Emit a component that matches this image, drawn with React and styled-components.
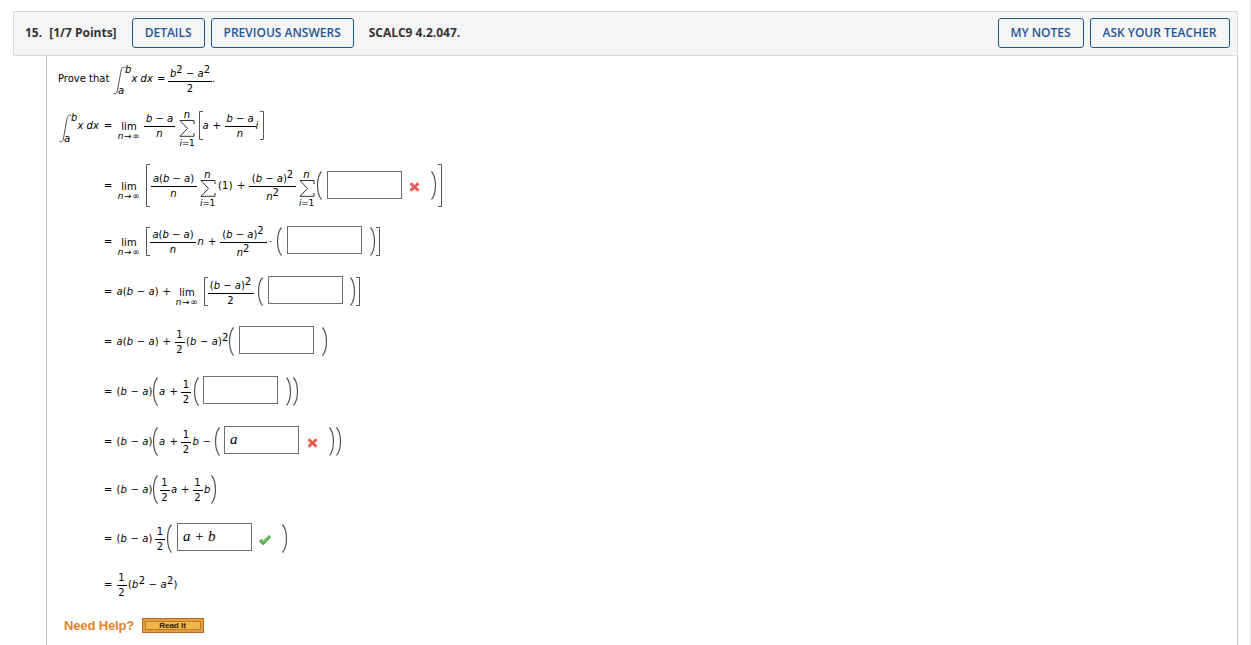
import React from "react";
import styled, { createGlobalStyle } from "styled-components";

const GlobalStyle = createGlobalStyle`
  * {
    box-sizing: border-box;
  }
  body {
    margin: 0;
    background: #fff;
    overflow: hidden;
  }
`;

const Page = styled.div`
  width: 1251px;
  height: 645px;
  padding: 11px 13px 0;
  border-right: 1px solid #e4e4e4;
  overflow: hidden;
`;

const Header = styled.header`
  display: flex;
  align-items: center;
  width: 1225px;
  height: 45px;
  padding: 0 7px 2px 11px;
  background: #f5f5f5;
  border: 1px solid #d8d8d8;
  border-radius: 1px;
  font: 700 12px "Open Sans", sans-serif;
  color: #333;
  white-space: nowrap;
`;

const Points = styled.span`
  margin-left: 7px;
  width: 83px;
`;

const HeaderButton = styled.button`
  width: ${(props) => props.$w}px;
  height: 30px;
  margin: 0 6px 0 0;
  padding: 0 1px 0 0;
  border: 1px solid #1f5592;
  border-radius: 3px;
  background: transparent;
  color: #1f5592;
  font: 600 12px "Open Sans", sans-serif;
  white-space: nowrap;

  &:last-child {
    margin-right: 0;
  }
`;

const Code = styled.span`
  margin-left: 8.5px;
  flex: 1;
`;

const Content = styled.main`
  width: 1192px;
  height: 589px;
  margin-left: 33px;
  padding: 2px 0 0 11px;
  border: solid #c4c4c4;
  border-width: 0 1px;
  font: 10px/12px "DejaVu Sans", sans-serif;
  color: #000;
`;

const Row = styled.div`
  display: flex;
  align-items: center;
  height: 41px;
  margin-bottom: ${(props) => props.$gap || 9}px;
  padding-left: ${(props) => props.$indent || 0}px;
  white-space: nowrap;
`;

const Part = styled.span`
  flex: none;
  width: ${(props) => props.$w}px;
  margin-left: ${(props) => props.$ml || 0}px;
  margin-top: ${(props) => props.$mt || 0}px;
`;

const Text = styled(Part)`
  margin-top: ${(props) => props.$mt ?? -2}px;
  letter-spacing: ${(props) => props.$ls || 0}px;
`;

const FractionBox = styled(Part)`
  display: grid;
  grid-template-rows: 13px 1px 13px;
  justify-items: center;
`;

const Bar = styled.span`
  width: 100%;
  background: #000;
`;

const Denominator = styled.span`
  padding-top: ${(props) => (props.$raised ? 4 : 1)}px;
`;

const Sup = styled.span`
  position: relative;
  top: -4px;
`;

const Limits = styled(Part)`
  display: grid;
  justify-items: center;
  grid-template-rows: ${(props) => props.$rows};
`;

const Index = styled.span`
  font-size: 9px;
  letter-spacing: -0.2px;
`;

const Approach = styled.span`
  font-size: 9px;
  letter-spacing: 0.6px;
`;

const IntegralBox = styled(Part)`
  display: flex;
  height: 29px;
`;

const Bounds = styled.span`
  display: flex;
  flex-direction: column;
  justify-content: space-between;
  margin: 0 0 -2px -8px;
`;

const Upper = styled.i`
  margin: -2px 0 0 7px;
`;

const Glyph = styled.svg`
  display: block;
  flex: none;
  overflow: visible;
  fill: none;
  stroke: ${(props) => props.$color || "#555"};
`;

const Blank = styled(Part).attrs({ as: "input", type: "text" })`
  width: 75px;
  height: 28px;
  padding: 0 5px 1px;
  border: 1px solid #6e6e6e;
  border-radius: 0;
  background: #fff;
  color: #000;
  font: italic 15px "Liberation Serif", serif;
`;

const HelpRow = styled.div`
  display: flex;
  align-items: center;
  height: 17px;
  padding-left: 6px;
`;

const HelpLabel = styled.span`
  width: 78px;
  color: #e08227;
  font: 700 13px "Liberation Sans", sans-serif;
  letter-spacing: -0.15px;
`;

const ReadButton = styled.button`
  width: 62px;
  height: 15px;
  padding: 0 1px 0 0;
  border: 1px solid #b8672a;
  background: #f2b549;
  box-shadow: inset 0 0 0 2px #ee9c37, inset 0 0 0 3px #b08038;
  color: #301c04;
  font: 700 8px/12px "Liberation Sans", sans-serif;
`;

const Fraction = ({ w, ml, mt, top, bottom, raised }) => (
  <FractionBox $w={w} $ml={ml} $mt={mt}>
    <span>{top}</span>
    <Bar />
    <Denominator $raised={raised}>{bottom}</Denominator>
  </FractionBox>
);

const Half = ({ ml }) => <Fraction w={10} ml={ml} top="1" bottom="2" />;

const Integral = () => (
  <IntegralBox $w={18.5} $mt={3}>
    <Glyph width="13" height="29" viewBox="0 0 13 29">
      <path d="M.5 27.500C3 28.500 4 27 4.500 24L8 5C8.500 2 9.500 .5 12.500 1.500" />
    </Glyph>
    <Bounds>
      <Upper>b</Upper>
      <i>a</i>
    </Bounds>
  </IntegralBox>
);

const Lim = ({ ml }) => (
  <Limits $w={25} $ml={ml} $mt={6} $rows="9px 9px">
    <span>lim</span>
    <Approach>
      <i>n</i>→∞
    </Approach>
  </Limits>
);

const Sum = ({ ml }) => (
  <Limits $w={16} $ml={ml} $mt={5} $rows="11px 17px 13px">
    <i>n</i>
    <Glyph width="16" height="17" viewBox="0 0 16 17" $color="#333">
      <path d="M15 4V.5H1L8.500 8.500L1 16.300H15V13" />
    </Glyph>
    <Index>
      <i>i</i>=1
    </Index>
  </Limits>
);

const Paren = ({ ml, right }) => (
  <Part $w={6} $ml={ml} $mt={-2}>
    <Glyph width="6" height="29" viewBox="0 0 6 29">
      <path
        d={right ? "M.5 .5C5.800 7 5.800 22 .5 28.500" : "M5.500 .5C.2 7 .2 22 5.500 28.500"}
        strokeWidth="1.200"
      />
    </Glyph>
  </Part>
);

const Bracket = ({ ml, right, h = 29 }) => (
  <Part $w={4} $ml={ml} $mt={-2}>
    <Glyph width="4" height={h} viewBox={`0 0 4 ${h}`}>
      <path d={right ? `M0 .5H3.500V${h - 0.5}H0` : `M4 .5H.5V${h - 0.5}H4`} />
    </Glyph>
  </Part>
);

const Wrong = () => (
  <Part $w={11} $ml={7.5}>
    <Glyph width="11" height="10" viewBox="0 0 11 10" $color="#ea5a52">
      <path d="M1.500 1.200L9.500 8.800M9.500 1.200L1.500 8.800" strokeWidth="2.800" />
    </Glyph>
  </Part>
);

const Right = () => (
  <Part $w={12} $ml={7}>
    <Glyph width="12" height="11" viewBox="0 0 12 11">
      <path d="M1.200 6L4.200 9L11 2" stroke="#4b9a47" strokeWidth="3.200" />
      <path d="M1.600 5.800L4.200 8.300L10.500 2" stroke="#74c56a" strokeWidth="1.600" />
    </Glyph>
  </Part>
);

const Equals = () => <Text $w={12.5}>=</Text>;

const Minus = () => (
  <Text $w={36} $ls={0.15}>
    (<i>b</i> − <i>a</i>)
  </Text>
);

const aTimes = (
  <>
    <i>a</i>(<i>b</i> − <i>a</i>)
  </>
);

const squared = (
  <>
    (<i>b</i> − <i>a</i>)<Sup>2</Sup>
  </>
);

const nSquared = (
  <>
    <i>n</i>
    <Sup>2</Sup>
  </>
);

const difference = (
  <>
    <i>b</i>
    <Sup>2</Sup> − <i>a</i>
    <Sup>2</Sup>
  </>
);

const bMinusA = <i>b − a</i>;

const App = () => (
  <>
    <GlobalStyle />
    <Page>
      <Header>
        <span>15.</span>
        <Points>[1/7 Points]</Points>
        <HeaderButton $w={73}>DETAILS</HeaderButton>
        <HeaderButton $w={143}>PREVIOUS ANSWERS</HeaderButton>
        <Code>SCALC9 4.2.047.</Code>
        <HeaderButton $w={86}>MY NOTES</HeaderButton>
        <HeaderButton $w={140}>ASK YOUR TEACHER</HeaderButton>
      </Header>
      <Content>
        <Row $gap={7}>
          <Text $w={55} $mt={0}>
            Prove that
          </Text>
          <Integral />
          <Text $w={25.5} $mt={0}>
            <i>x dx</i>
          </Text>
          <Text $w={11} $mt={0}>
            =
          </Text>
          <Fraction w={44} mt={6} top={difference} bottom="2" />
          <Text $w={4} $mt={0}>
            .
          </Text>
        </Row>
        <Row $gap={19} $indent={1}>
          <Integral />
          <Text $w={26.5}>
            <i>x dx</i>
          </Text>
          <Equals />
          <Lim />
          <Fraction w={31} ml={2.5} top={bMinusA} bottom={<i>n</i>} />
          <Sum ml={4} />
          <Bracket ml={4} />
          <Text $w={10} $ml={-0.5}>
            <i>a</i>
          </Text>
          <Text $w={12}>+</Text>
          <Fraction w={31} top={bMinusA} bottom={<i>n</i>} />
          <Text $w={4}>
            <i>i</i>
          </Text>
          <Bracket right />
        </Row>
        <Row $gap={15} $indent={46}>
          <Equals />
          <Lim />
          <Bracket ml={4.5} h={43} />
          <Fraction w={46} ml={0.5} top={aTimes} bottom={<i>n</i>} />
          <Sum ml={3} />
          <Text $w={19} $ml={2.5} $ls={0.2}>
            (1)
          </Text>
          <Text $w={12}>+</Text>
          <Fraction w={47} top={squared} bottom={nSquared} raised />
          <Sum ml={2.5} />
          <Paren ml={1.5} />
          <Blank $ml={4.5} $mt={-3} />
          <Wrong />
          <Paren ml={11} right />
          <Bracket ml={0.5} right h={43} />
        </Row>
        <Row $indent={46}>
          <Equals />
          <Lim />
          <Bracket ml={4.5} />
          <Fraction w={46} top={aTimes} bottom={<i>n</i>} />
          <Text $w={10.5} $ml={1.5}>
            <i>n</i>
          </Text>
          <Text $w={11.5}>+</Text>
          <Fraction w={47} top={squared} bottom={nSquared} raised />
          <Text $w={7} $ml={2.5}>
            ·
          </Text>
          <Paren ml={-0.5} />
          <Blank $ml={5} $mt={-5} />
          <Paren ml={8} right />
          <Bracket right />
        </Row>
        <Row $indent={46}>
          <Equals />
          <Text $w={46} $ls={0.15}>
            {aTimes}
          </Text>
          <Text $w={12}>+</Text>
          <Lim />
          <Bracket ml={4.5} />
          <Fraction w={46} ml={-0.5} mt={2} top={squared} bottom="2" />
          <Paren ml={3} />
          <Blank $ml={5} $mt={-5} />
          <Paren ml={7.5} right />
          <Bracket right />
        </Row>
        <Row $indent={46}>
          <Equals />
          <Text $w={46} $ls={0.15}>
            {aTimes}
          </Text>
          <Text $w={12}>+</Text>
          <Half />
          <Text $w={42} $ml={1.5} $ls={0.15}>
            {squared}
          </Text>
          <Paren ml={-0.5} />
          <Blank $ml={5} $mt={-5} />
          <Paren ml={8} right />
        </Row>
        <Row $indent={46}>
          <Equals />
          <Minus />
          <Paren ml={-0.5} />
          <Text $w={10.5} $ml={1}>
            <i>a</i>
          </Text>
          <Text $w={11.5}>+</Text>
          <Half />
          <Paren ml={1.5} />
          <Blank $ml={4.5} $mt={-5} />
          <Paren ml={7.5} right />
          <Paren right ml={1} />
        </Row>
        <Row $gap={7} $indent={46}>
          <Equals />
          <Minus />
          <Paren ml={-0.5} />
          <Text $w={10.5} $ml={1}>
            <i>a</i>
          </Text>
          <Text $w={11.5}>+</Text>
          <Half />
          <Text $w={10} $ml={1.5}>
            <i>b</i>
          </Text>
          <Text $w={12}>−</Text>
          <Paren ml={-0.5} />
          <Blank $ml={4} $mt={-5} defaultValue="a" />
          <Wrong />
          <Paren ml={11} right />
          <Paren right ml={1} />
        </Row>
        <Row $gap={8} $indent={46}>
          <Equals />
          <Minus />
          <Paren ml={-0.5} />
          <Half ml={1.5} />
          <Text $w={10} $ml={1.5}>
            <i>a</i>
          </Text>
          <Text $w={11.5}>+</Text>
          <Half />
          <Text $w={7} $ml={1.5}>
            <i>b</i>
          </Text>
          <Paren right />
        </Row>
        <Row $gap={5} $indent={46}>
          <Equals />
          <Minus />
          <Half ml={2.5} />
          <Paren ml={1} />
          <Blank $ml={5} $mt={-5} defaultValue="a + b" />
          <Right />
          <Paren ml={11} right />
        </Row>
        <Row $gap={11} $indent={46}>
          <Equals />
          <Half />
          <Text $w={50} $ml={1.5} $ls={0.2}>
            ({difference})
          </Text>
        </Row>
        <HelpRow>
          <HelpLabel>Need Help?</HelpLabel>
          <ReadButton>Read It</ReadButton>
        </HelpRow>
      </Content>
    </Page>
  </>
);

export default App;
